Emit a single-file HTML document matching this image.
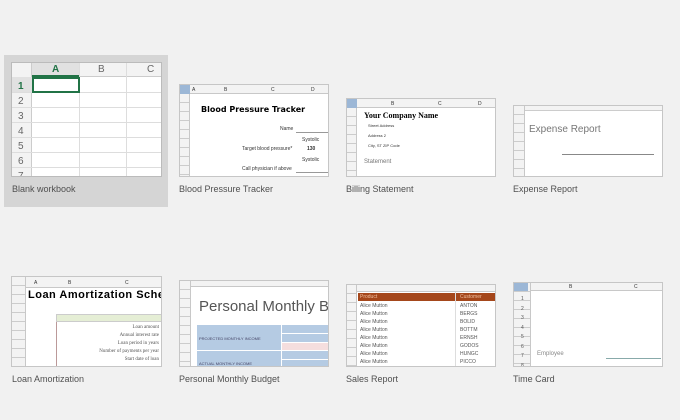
<!DOCTYPE html>
<html><head><style>
*{margin:0;padding:0;box-sizing:border-box}
body{width:680px;height:420px;background:#f1f1f1;font-family:"Liberation Sans",sans-serif;position:relative;overflow:hidden}
.a{position:absolute}
.t{position:absolute;background:#fff;border:1px solid #c6c6c6;overflow:hidden}
.lbl{position:absolute;font-size:9px;color:#505050}
.hd{position:absolute;left:0;top:0;right:0;height:9px;background:#f3f3f3;border-bottom:1px solid #c8c8c8}
.rh{position:absolute;left:0;top:0;bottom:0;width:10px;background:#f3f3f3;border-right:1px solid #c8c8c8;background-image:repeating-linear-gradient(#f3f3f3 0 8px,#ccc 8px 9px)}
.s{position:absolute;font-size:5px;color:#333;white-space:nowrap}
.corner{position:absolute;left:0;top:0;width:10px;height:9px;background:#9cb7d6}
</style></head><body>
<div class="a" style="left:4px;top:55px;width:164px;height:152px;background:#d5d5d5"></div>
<!-- blank -->
<div class="t" style="left:11px;top:62px;width:151px;height:115px;border-color:#bbb">
 <div class="a" style="left:0;top:0;width:151px;height:14px;background:#f3f3f3;border-bottom:1px solid #ccc"></div>
 <div class="a" style="left:0;top:0;width:20px;height:115px;background:#f3f3f3;border-right:1px solid #ccc"></div>
 <div class="a" style="left:20px;top:0;width:48px;height:14px;background:#e1e1e1;border-bottom:2px solid #217346"></div>
 <div class="a" style="left:0;top:14px;width:20px;height:15px;background:#e1e1e1"></div>
 <div class="a" style="left:67px;top:0;width:1px;height:115px;background:#ddd"></div>
 <div class="a" style="left:114px;top:0;width:1px;height:115px;background:#ddd"></div>
 <div class="a" style="left:0;top:29px;width:151px;height:1px;background:#ddd"></div>
 <div class="a" style="left:0;top:44px;width:151px;height:1px;background:#ddd"></div>
 <div class="a" style="left:0;top:59px;width:151px;height:1px;background:#ddd"></div>
 <div class="a" style="left:0;top:74px;width:151px;height:1px;background:#ddd"></div>
 <div class="a" style="left:0;top:89px;width:151px;height:1px;background:#ddd"></div>
 <div class="a" style="left:0;top:104px;width:151px;height:1px;background:#ddd"></div>
 <div class="a" style="left:20px;top:14px;width:48px;height:16px;border:2px solid #217346"></div>
 <div class="a" style="left:40px;top:1px;font-size:10px;color:#217346;font-weight:bold">A</div>
 <div class="a" style="left:86px;top:1px;font-size:10px;color:#666">B</div>
 <div class="a" style="left:135px;top:1px;font-size:10px;color:#666">C</div>
 <div class="a" style="left:6px;top:16px;font-size:10px;color:#217346;font-weight:bold;line-height:15px">1</div>
 <div class="a" style="left:6px;top:31px;font-size:10px;color:#666;line-height:15px">2<br>3<br>4<br>5<br>6<br>7</div>
</div>
<div class="lbl" style="left:12px;top:184px">Blank workbook</div>
<!-- BP -->
<div class="t" style="left:179px;top:84px;width:150px;height:93px">
 <div class="hd"></div><div class="rh"></div><div class="corner"></div>
 <div class="s" style="left:12px;top:2px">A</div><div class="s" style="left:44px;top:2px">B</div><div class="s" style="left:91px;top:2px">C</div><div class="s" style="left:131px;top:2px">D</div>
 <div class="a" style="left:21px;top:20px;font-size:8px;font-weight:bold;font-family:'DejaVu Sans'">Blood Pressure Tracker</div>
 <div class="s" style="left:100px;top:41px">Name</div><div class="a" style="left:116px;top:47px;width:32px;height:1px;background:#999"></div>
 <div class="s" style="left:122px;top:52px">Systolic</div>
 <div class="s" style="left:62px;top:61px">Target blood pressure*</div><div class="s" style="left:127px;top:61px;font-weight:bold">130</div>
 <div class="s" style="left:122px;top:72px">Systolic</div>
 <div class="s" style="left:62px;top:81px">Call physician if above</div><div class="a" style="left:116px;top:87px;width:32px;height:1px;background:#999"></div>
</div>
<div class="lbl" style="left:179px;top:184px">Blood Pressure Tracker</div>
<!-- Billing -->
<div class="t" style="left:346px;top:98px;width:150px;height:79px">
 <div class="hd"></div><div class="rh"></div><div class="corner"></div>
 <div class="s" style="left:44px;top:2px">B</div><div class="s" style="left:91px;top:2px">C</div><div class="s" style="left:131px;top:2px">D</div>
 <div class="a" style="left:17px;top:12px;font-size:8px;font-weight:bold;font-family:'Liberation Serif'">Your Company Name</div>
 <div class="s" style="left:21px;top:24px;font-size:4px">Street Address<br><br>Address 2<br><br>City, ST ZIP Code</div>
 <div class="s" style="left:17px;top:60px;font-size:6px;color:#777">Statement</div>
</div>
<div class="lbl" style="left:346px;top:184px">Billing Statement</div>
<!-- Expense -->
<div class="t" style="left:513px;top:105px;width:150px;height:72px">
 <div class="a" style="left:0;top:0;right:0;height:5px;background:#f3f3f3;border-bottom:1px solid #ccc"></div><div class="rh" style="width:11px"></div>
 <div class="a" style="left:15px;top:18px;font-size:10px;color:#777">Expense Report</div>
 <div class="a" style="left:48px;top:48px;width:92px;height:1px;background:#888"></div>
</div>
<div class="lbl" style="left:513px;top:184px">Expense Report</div>
<!-- Loan -->
<div class="t" style="left:11px;top:276px;width:151px;height:91px">
 <div class="hd" style="height:11px"></div><div class="rh" style="width:14px"></div>
 <div class="s" style="left:22px;top:3px">A</div><div class="s" style="left:56px;top:3px">B</div><div class="s" style="left:113px;top:3px">C</div>
 <div class="a" style="left:16px;top:12px;font-size:11px;font-weight:bold;white-space:nowrap;letter-spacing:.5px">Loan Amortization Sched</div>
 <div class="a" style="left:44px;top:37px;width:110px;height:8px;background:#e5eed5;border:1px solid #ccc"></div>
 <div class="a" style="left:44px;top:45px;width:1px;height:46px;background:#b99"></div>
 <div class="s" style="right:2px;top:47px;font-family:'Liberation Serif';color:#555;text-align:right;line-height:8px">Loan amount<br>Annual interest rate<br>Loan period in years<br>Number of payments per year<br>Start date of loan</div>
</div>
<div class="lbl" style="left:12px;top:374px">Loan Amortization</div>
<!-- Budget -->
<div class="t" style="left:179px;top:280px;width:150px;height:87px">
 <div class="hd" style="height:6px"></div><div class="rh" style="width:11px"></div>
 <div class="a" style="left:19px;top:17px;font-size:15px;color:#555;white-space:nowrap">Personal Monthly Bud</div>
 <div class="a" style="left:17px;top:44px;width:84px;height:25px;background:#b5cbe3"></div>
 <div class="a" style="left:17px;top:70px;width:84px;height:17px;background:#b5cbe3"></div>
 <div class="a" style="left:102px;top:44px;width:48px;height:8px;background:#b5cbe3"></div>
 <div class="a" style="left:102px;top:53px;width:48px;height:8px;background:#b5cbe3"></div>
 <div class="a" style="left:102px;top:62px;width:48px;height:7px;background:#f5dede"></div>
 <div class="a" style="left:102px;top:70px;width:48px;height:8px;background:#b5cbe3"></div>
 <div class="a" style="left:102px;top:79px;width:48px;height:8px;background:#b5cbe3"></div>
 <div class="s" style="left:19px;top:55px;font-size:4px;color:#446">PROJECTED MONTHLY INCOME</div>
 <div class="s" style="left:19px;top:80px;font-size:4px;color:#446">ACTUAL MONTHLY INCOME</div>
</div>
<div class="lbl" style="left:179px;top:374px">Personal Monthly Budget</div>
<!-- Sales -->
<div class="t" style="left:346px;top:284px;width:150px;height:83px">
 <div class="hd" style="height:7px"></div><div class="rh" style="width:10px"></div>
 <div class="a" style="left:11px;top:8px;width:139px;height:8px;background:#a5471b"></div>
 <div class="s" style="left:13px;top:9px;color:#f0c0a0">Product</div><div class="s" style="left:113px;top:9px;color:#f0c0a0">Customer</div>
 <div class="s" style="left:13px;top:17px;line-height:8px;color:#555">Alice Mutton<br>Alice Mutton<br>Alice Mutton<br>Alice Mutton<br>Alice Mutton<br>Alice Mutton<br>Alice Mutton<br>Alice Mutton</div>
 <div class="s" style="left:113px;top:17px;line-height:8px;color:#555">ANTON<br>BERGS<br>BOLID<br>BOTTM<br>ERNSH<br>GODOS<br>HUNGC<br>PICCO</div>
 <div class="a" style="left:108px;top:7px;width:1px;height:80px;background:#ddd"></div>
</div>
<div class="lbl" style="left:346px;top:374px">Sales Report</div>
<!-- Time -->
<div class="t" style="left:513px;top:282px;width:150px;height:85px">
 <div class="hd" style="height:8px"></div><div class="rh" style="width:17px"></div><div class="corner" style="width:14px;height:8px"></div>
 <div class="s" style="left:55px;top:1px">B</div><div class="s" style="left:120px;top:1px">C</div>
 <div class="s" style="left:7px;top:12px;line-height:9.5px;color:#555">1<br>2<br>3<br>4<br>5<br>6<br>7<br>8</div>
 <div class="s" style="left:23px;top:68px;font-size:6px;color:#888">Employee</div>
 <div class="a" style="left:92px;top:75px;width:55px;height:1px;background:#8aa"></div>
</div>
<div class="lbl" style="left:513px;top:374px">Time Card</div>
</body></html>
